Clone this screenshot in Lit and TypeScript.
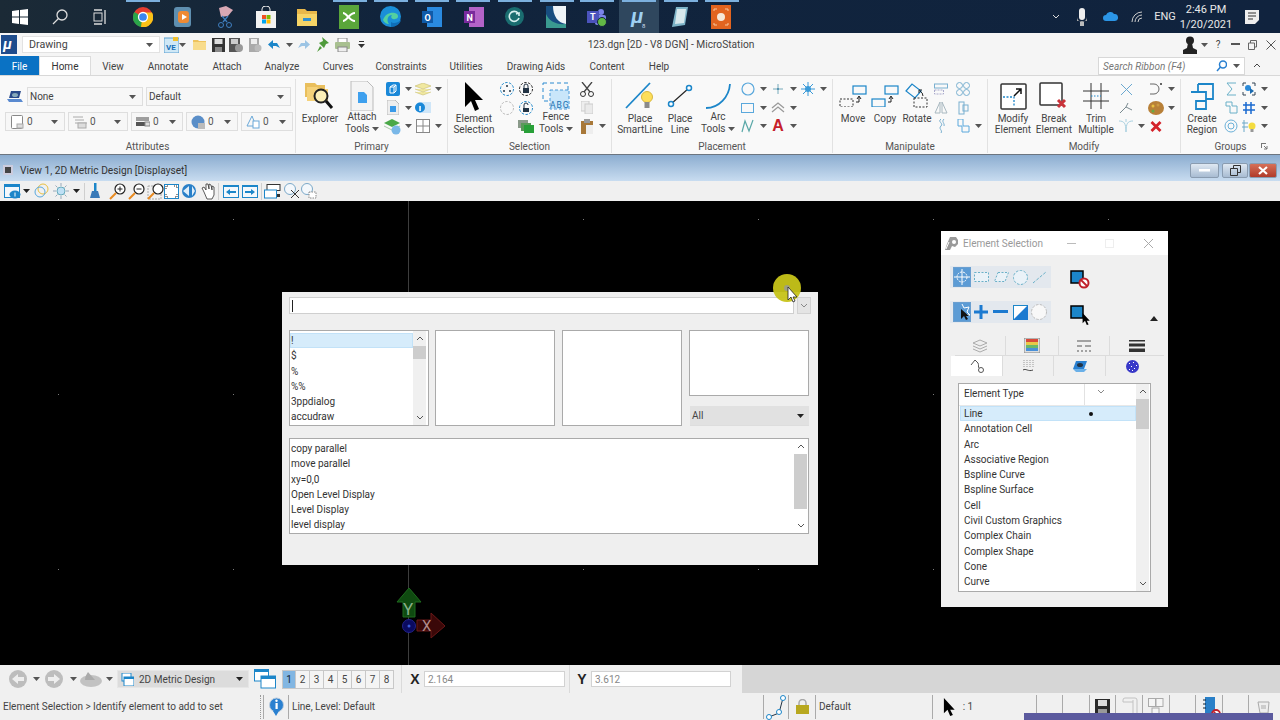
import { LitElement, html, css, svg } from "lit";
import { customElement } from "lit/decorators.js";

const I = (w: number, h: number, b: any) => html`<svg width=${w} height=${h} viewBox="0 0 ${w} ${h}">${b}</svg>`;
const row = (start: number, items: any[]) => {
  let cur = start;
  return items.map(([c, w, t]) => {
    const ml = c - w / 2 - cur;
    cur = c + w / 2;
    return html`<div class="sl" style="margin-left:${ml}px;width:${w}px">${t}</div>`;
  });
};
const car = I(7, 4, svg`<path d="M0 0h7L3.5 4z" fill="#555"/>`);
const carK = I(7, 4, svg`<path d="M0 0h7L3.5 4z" fill="#222"/>`);
const chev = (col = "#555") => I(8, 5, svg`<path d="M1 1l3 3 3-3" fill="none" stroke=${col}/>`);
const chevU = (col = "#555") => I(8, 5, svg`<path d="M1 4l3-3 3 3" fill="none" stroke=${col}/>`);
const ptr = (sc = 1, col = "#000") => I(13 * sc, 20 * sc, svg`<path transform="scale(${sc})" d="M1 0v17l4-4 3 7 3-1-3-6h5z" fill=${col}/>`);
const B = "#1c86c9";

const tb = {
  win: I(16, 16, svg`<path d="M0 2l7-1v6.500H0zM8 1l8-1v7.500H8zM0 8.500h7V15l-7-1zM8 8.500h8V16l-8-1z" fill="#fff"/>`),
  search: I(16, 16, svg`<circle cx="10" cy="6" r="5" fill="none" stroke="#ddd" stroke-width="1.300"/><path d="M6.500 9.500L1 15" stroke="#ddd" stroke-width="1.300"/>`),
  tv: I(14, 16, svg`<rect x="1" y="4" width="8" height="8" fill="none" stroke="#ddd"/><path d="M1 1h8M1 15h8M12 1v14" stroke="#ddd" stroke-width="1.300"/>`),
  chrome: I(20, 20, svg`<circle cx="10" cy="10" r="10" fill="#e53d30"/><path d="M10 10L1.300 5A10 10 0 0 0 8 20z" fill="#2aa54a"/><path d="M10 5.500h9A10 10 0 0 1 8 20z" fill="#fbc117"/><circle cx="10" cy="10" r="4.500" fill="#3b86ee" stroke="#fff" stroke-width="1.300"/>`),
  play: I(17, 20, svg`<rect width="17" height="20" rx="3" fill="#5f8fb0"/><rect x="4" y="4" width="11" height="12" rx="3" fill="#ef8a33"/><path d="M8 7l5 3-5 3z" fill="#fff"/>`),
  snip: I(18, 22, svg`<path d="M3 2l7-2 7 4-5 6-7 1z" fill="#d8a8b4"/><path d="M6 10l5 6M12 10l-5 6" stroke="#3f7fc0" stroke-width="1.200"/><circle cx="5" cy="19" r="2.500" fill="none" stroke="#3f7fc0"/><circle cx="13" cy="19" r="2.500" fill="none" stroke="#3f7fc0"/>`),
  store: I(20, 22, svg`<rect y="5" width="20" height="17" fill="#f2f2f2"/><path d="M6 6V3a4 3 0 0 1 8 0v3" fill="none" stroke="#eee"/><rect x="6" y="9" width="4" height="4" fill="#f25022"/><rect x="10.500" y="9" width="4" height="4" fill="#7fba00"/><rect x="6" y="13.500" width="4" height="4" fill="#00a4ef"/><rect x="10.500" y="13.500" width="4" height="4" fill="#ffb900"/>`),
  expl: I(20, 18, svg`<path d="M0 1h8l2 2h10v15H0z" fill="#e8b84a"/><rect y="6" width="20" height="12" fill="#f6d466"/><rect x="6" y="10" width="8" height="3" fill="#2f8fd0"/>`),
  xs: I(20, 24, svg`<rect width="20" height="24" fill="#5aa63a"/><path d="M4 8c4 0 6 8 12 8M4 16c4 0 6-8 12-8" fill="none" stroke="#fff" stroke-width="2"/>`),
  edge: I(21, 21, svg`<circle cx="10.500" cy="10.500" r="10.500" fill="#1a8fd8"/><path d="M3 14c2-7 10-9 14-6 2 2 1 5-2 5-3 1-5-2-3-4-4 0-6 5-3 9-3 0-5-2-6-4z" fill="#53d0a0"/><path d="M11 21c5 0 9-3 10-7-3 3-8 4-10 2z" fill="#0f6fb8"/>`),
  outlook: I(20, 20, svg`<rect x="5" width="15" height="20" fill="#2a8ae0"/><rect y="4" width="11" height="12" fill="#0f5aa8"/><text x="2.500" y="13.500" font-size="9" fill="#fff" font-weight="700">O</text>`),
  one: I(20, 20, svg`<rect x="5" width="15" height="20" fill="#b463c8"/><rect y="4" width="11" height="12" fill="#7a2a9c"/><text x="2.500" y="13.500" font-size="9" fill="#fff" font-weight="700">N</text>`),
  teal: I(19, 19, svg`<circle cx="9.500" cy="9.500" r="9.500" fill="#1a6d70"/><path d="M13 6a5 5 0 1 0 1 5M11 7l3-1 0 3" fill="none" stroke="#d8f0f0" stroke-width="1.600"/>`),
  moon: I(20, 22, svg`<rect width="20" height="22" fill="#174d80"/><path d="M7 0h13v18C12 17 7 10 7 0z" fill="#eef4f8"/><path d="M0 8c3 7 10 11 20 10v4H0z" fill="#3a9a90"/>`),
  teams: I(20, 20, svg`<circle cx="14" cy="5" r="3" fill="#7b83eb"/><rect x="8" y="8" width="11" height="10" rx="2" fill="#7b83eb"/><rect y="4" width="12" height="12" fill="#4b53bc"/><text x="3" y="13" font-size="9" fill="#fff" font-weight="700">T</text><circle cx="15" cy="15" r="4.500" fill="#62b846" stroke="#12263c"/>`),
  ms: I(22, 24, svg`<text x="3" y="18" font-size="21" font-style="italic" font-weight="700" fill="#9fd0f2">μ</text><text x="14" y="23" font-size="6" fill="#cde">8</text>`),
  note: I(16, 20, svg`<path d="M4 0h12l-3 18-13 2z" fill="#7eb4c8"/><path d="M5 2h9l-2 14-9 1z" fill="#d8e8ec"/>`),
  orange: I(20, 24, svg`<rect width="20" height="24" fill="#e2641f"/><circle cx="10" cy="12" r="4" fill="#f6e8d8"/><path d="M3 6V4h3M14 4h3v2M3 18v2h3M14 20h3v-2" stroke="#f6c8a0" fill="none"/>`),
  mic: I(10, 18, svg`<rect x="2" width="6" height="12" rx="3" fill="#eee"/><path d="M0 9a5 5 0 0 0 10 0v4H0z" fill="#aaa"/><rect x="3" y="14" width="4" height="4" fill="#bbb"/>`),
  cloud: I(15, 9, svg`<path d="M3 9a3 3 0 0 1 0-6 4.500 4.500 0 0 1 8-1 3.500 3.500 0 0 1 1 7z" fill="#2b95e6"/>`),
  wifi: I(12, 12, svg`<g fill="none" stroke="#ccc"><path d="M1 11a10 10 0 0 1 10-10"/><path d="M4 11a7 7 0 0 1 7-7"/><path d="M7 11a4 4 0 0 1 4-4"/></g>`),
  notif: I(14, 14, svg`<path d="M0 0h14v10l-4 4H0z" fill="#eee"/><path d="M3 3h8M3 6h8M3 9h5" stroke="#333"/>`),
};
const user = I(14, 18, svg`<circle cx="7" cy="4.500" r="4" fill="#222"/><path d="M5 7h4l1 5 4 2v4H0v-4l4-2z" fill="#222"/>`);

const t = {
  logo: I(16, 19, svg`<rect width="16" height="19" fill="#1e4c8c"/><text x="2" y="14" font-size="15" font-style="italic" font-weight="700" fill="#fff">μ</text>`),
  ve: I(15, 16, svg`<rect y="1" width="15" height="15" fill="#cfe8f6" stroke="#5a9fd0"/><text x="2" y="13" font-size="8" fill="#1a70b8" font-weight="700">VE</text><rect x="9" width="5" height="4" fill="#f0c030"/>`),
  open: I(14, 11, svg`<path d="M0 1h5l1 1h7v9H0z" fill="#eec35e"/><rect y="3" width="13" height="8" fill="#f8dc8c"/>`),
  save: (c = "#333") => I(13, 14, svg`<rect width="13" height="14" fill=${c}/><rect x="2.500" y="1" width="8" height="5" fill="#ddd"/><rect x="3" y="9" width="7" height="5" fill="#888"/>`),
  saves: I(14, 14, svg`<rect width="11" height="14" fill="#555"/><rect x="2" y="1" width="7" height="5" fill="#ccc"/><circle cx="10" cy="10" r="4" fill="#999"/>`),
  compress: I(13, 14, svg`<rect width="10" height="14" fill="#aaa"/><rect x="2" y="1" width="6" height="5" fill="#eee"/><circle cx="9" cy="10" r="3.500" fill="#bbb"/>`),
  undo: (col: string, f = false) => I(12, 9, svg`<path transform=${f ? "translate(12) scale(-1 1)" : ""} d="M0 4.500L5 0v3h4l3 5-4-2H5v3z" fill=${col}/>`),
  pin: I(12, 15, svg`<path d="M5 0l7 6-3 1-2 4-5-5 4-2zM3 9l-3 6 5-4" fill="#4e9a3a"/>`),
  print: I(15, 14, svg`<rect x="3" width="9" height="5" fill="#fff" stroke="#888"/><rect y="4" width="15" height="7" rx="1" fill="#a8c090"/><rect x="3" y="9" width="9" height="5" fill="#eee" stroke="#888"/>`),
  more: I(7, 7, svg`<path d="M1 0h5v1H1zM0 3h7L3.500 7z" fill="#333"/>`),
};

const big = {
  explorer: I(32, 30, svg`<path d="M1 2h10l2 2h8v12H1z" fill="#e9bf5d"/><path d="M3 6h10l2 2h9v12H3z" fill="#f5d27a"/><circle cx="17" cy="15" r="6.500" fill="#fdf0b8" stroke="#222" stroke-width="2"/><path d="M22 20l6 7" stroke="#111" stroke-width="3"/>`),
  attach: I(24, 30, svg`<path d="M1 0h16l6 6v24H1z" fill="#f4f4f4" stroke="#bbb"/><path d="M8 11h6l3 3v8H8z" fill="#3ea0ee"/>`),
  arrow: I(20, 29, svg`<path d="M1 0v25l6-6 4 10 4-2-4-9h8z" fill="#000"/>`),
  fence: I(28, 28, svg`<rect x="1" y="1" width="25" height="18" fill="none" stroke="#2a8ad0" stroke-dasharray="4 3"/><rect x="8" y="8" width="19" height="19" fill="#c9e6fa" stroke="#4a9ada" stroke-dasharray="3 2"/><text x="8" y="26" font-size="8.500" fill="#1870b0" letter-spacing="1">ABG</text>`),
  smart: I(30, 28, svg`<path d="M1 26L25 1" stroke="#1c86c9" stroke-width="1.800"/><circle cx="22" cy="15" r="5.500" fill="#fdde5a" stroke="#d8b840"/><rect x="19.500" y="20" width="5" height="6" fill="#8a8a8a"/>`),
  line: I(26, 24, svg`<path d="M4 20L22 4" stroke="#222" stroke-width="1.200"/><circle cx="4" cy="20" r="2.500" fill="#fff" stroke=${B} stroke-width="1.500"/><circle cx="22" cy="4" r="2.500" fill="#fff" stroke=${B} stroke-width="1.500"/>`),
  arc: I(26, 26, svg`<path d="M1 25C14 25 24 14 25 1" fill="none" stroke=${B} stroke-width="1.800"/>`),
  move: I(28, 22, svg`<rect x="14" y="1" width="13" height="8" fill="none" stroke=${B} stroke-width="1.200"/><rect x="1" y="14" width="13" height="8" fill="none" stroke="#333" stroke-dasharray="2 1.500"/><path d="M17 17h3v-5M18 14l2-3 2 3" fill="none" stroke="#222"/>`),
  copy: I(28, 22, svg`<rect x="14" y="1" width="13" height="8" fill="none" stroke=${B} stroke-width="1.200"/><rect x="1" y="14" width="13" height="8" fill="none" stroke=${B} stroke-width="1.200"/><path d="M17 17h3v-5M18 14l2-3 2 3" fill="none" stroke="#222"/>`),
  rotate: I(24, 26, svg`<path d="M1 8L7 1l9 7-6 7z" fill="none" stroke=${B} stroke-width="1.200"/><rect x="9" y="15" width="13" height="9" fill="none" stroke="#333" stroke-dasharray="2 1.500"/><path d="M18 13a6 6 0 0 0-3-5M14 10l0-3 3 0" fill="none" stroke="#222"/>`),
  modify: I(27, 27, svg`<rect x="1" y="1" width="25" height="25" rx="1" fill="#fff" stroke="#333" stroke-width="1.500"/><path d="M3 14h11v10" fill="none" stroke=${B} stroke-dasharray="2 1.500" stroke-width="1.300"/><path d="M14 13l7-7M16 6h5v5" fill="none" stroke="#111" stroke-width="1.500"/>`),
  brk: I(30, 28, svg`<rect x="1" y="1" width="22" height="22" rx="1" fill="#fff" stroke="#333" stroke-width="1.500"/><path d="M19 18l7 7M26 18l-7 7" stroke="#c9333a" stroke-width="3"/>`),
  trim: I(28, 28, svg`<path d="M1 9h26M1 19h26M9 1v26M19 1v26" stroke="#333"/><path d="M9 14h10" stroke=${B} stroke-dasharray="1.500 1.500"/>`),
  region: I(24, 27, svg`<path d="M8 1h15v15H16M1 9h15v9H6v8h10V9M8 1v8" fill="none" stroke=${B} stroke-width="1.800"/>`),
};
const sm = {
  level: I(16, 16, svg`<rect x="1" y="1" width="14" height="14" rx="2" fill="#1a88d8"/><path d="M5 6l3-2h3v6l-2 2H5zM5 6h4v6M9 6l2-2" fill="none" stroke="#fff"/>`),
  stack: I(16, 13, svg`<path d="M0 3l8-3 8 3-8 3zM0 6l8 3 8-3M0 9l8 3 8-3" fill="#f0e8a0" stroke="#c8bc70" stroke-width=".6"/>`),
  doc: I(12, 15, svg`<path d="M0 0h8l4 4v11H0z" fill="#eee" stroke="#bbb"/><rect x="3" y="6" width="6" height="6" fill="#3a9ae8"/>`),
  info: I(16, 11, svg`<rect x="4" y="0" width="12" height="11" fill="#cfe6f8"/><circle cx="5" cy="5.500" r="5" fill="#1a88d8"/><rect x="4.300" y="4" width="1.500" height="5" fill="#fff"/>`),
  green: I(18, 18, svg`<path d="M0 6l8-4 8 4-8 4z" fill="#4aa848"/><path d="M0 9l8 4 8-4" fill="none" stroke="#a8c8a8"/><circle cx="12" cy="13" r="4.500" fill="#7ab8e8"/>`),
  pane: I(14, 14, svg`<rect x=".5" y=".5" width="13" height="13" fill="#fff" stroke="#888"/><path d="M7 0v14M0 7h14" stroke="#888"/>`),
  dash1: I(16, 16, svg`<circle cx="8" cy="8" r="6.500" fill="none" stroke=${B} stroke-dasharray="2.500 1.500"/><circle cx="8" cy="5" r="1" fill="#234"/><circle cx="5" cy="10" r="1" fill="#234"/><circle cx="11" cy="10" r="1" fill="#234"/>`),
  lock: I(16, 16, svg`<circle cx="8" cy="8" r="6.500" fill="none" stroke="#222" stroke-dasharray="2.500 1.500"/><rect x="5" y="7" width="6" height="5" fill="#234"/><path d="M6 7V5a2 2 0 0 1 4 0v2" fill="none" stroke="#234"/>`),
  dash2: I(16, 16, svg`<circle cx="8" cy="8" r="6.500" fill="none" stroke="#bbb" stroke-dasharray="2.500 1.500"/>`),
  unlock: I(16, 16, svg`<circle cx="8" cy="8" r="6.500" fill="none" stroke=${B} stroke-dasharray="2.500 1.500"/><rect x="5" y="8" width="6" height="4" fill="#234"/><path d="M6 8V5a2 2 0 0 1 4 0" fill="none" stroke="#234"/>`),
  cards: I(16, 13, svg`<rect y="0" width="10" height="8" fill="#8a9a8a"/><rect x="3" y="3" width="10" height="8" fill="#5a9a5a"/><rect x="6" y="5" width="10" height="8" fill="#28a038"/>`),
  cut: I(14, 15, svg`<path d="M2 0l8 10M12 0L4 10" stroke="#444" stroke-width="1.300"/><circle cx="3" cy="12" r="2.500" fill="none" stroke="#333"/><circle cx="11" cy="12" r="2.500" fill="none" stroke="#333"/>`),
  copy: I(12, 13, svg`<rect width="8" height="10" fill="#eee" stroke="#ccc"/><rect x="4" y="3" width="8" height="10" fill="#eaeaea" stroke="#ccc"/>`),
  paste: I(12, 15, svg`<rect y="2" width="12" height="13" fill="#a87838"/><rect x="3" width="6" height="4" fill="#999"/><rect x="5" y="6" width="7" height="9" fill="#eee"/>`),
  circle: I(14, 14, svg`<circle cx="7" cy="7" r="6" fill="none" stroke="#5aa8dc" stroke-width="1.200"/>`),
  rect: I(14, 10, svg`<rect x=".5" y=".5" width="12" height="9" fill="none" stroke="#5aa8dc"/>`),
  zig: I(14, 14, svg`<path d="M1 13L4 2l4 10 4-11" fill="none" stroke="#5aa8a8" stroke-width="1.200"/>`),
  plus: I(12, 12, svg`<path d="M6 1v10M1 6h10" stroke="#7ab" /><circle cx="6" cy="6" r="1" fill="#48a"/>`),
  chevs: I(14, 12, svg`<path d="M1 6l6-5 6 5M1 10l6-5 6 5" fill="none" stroke="#9a9a9a" stroke-width="1.300"/>`),
  a: html`<span class="redA">A</span>`,
  sun: I(14, 14, svg`<circle cx="7" cy="7" r="3" fill="#3a9ad8"/><path d="M7 0v14M0 7h14M2 2l10 10M12 2L2 12" stroke="#3a9ad8" stroke-width="1"/>`),
  m1: I(14, 12, svg`<rect x=".5" y="1" width="13" height="4" fill="none" stroke="#7ab0d0"/><rect x=".5" y="7" width="9" height="4" fill="none" stroke="#aac" stroke-dasharray="2 1"/>`),
  m2: I(14, 14, svg`<g fill="none" stroke="#7ab0d0"><circle cx="3.500" cy="3.500" r="3"/><circle cx="10.500" cy="3.500" r="3"/><circle cx="3.500" cy="10.500" r="3"/><circle cx="10.500" cy="10.500" r="3"/></g>`),
  m3: I(14, 13, svg`<path d="M6 1L1 12h5zM8 1l5 11H8z" fill="none" stroke="#a8b8c0"/>`),
  m4: I(12, 14, svg`<rect x="2" y="1" width="5" height="12" fill="none" stroke="#7ab0d0"/><rect x="6" y="4" width="5" height="6" fill="none" stroke="#7ab0d0"/>`),
  m5: I(8, 14, svg`<path d="M4 0c-4 3 3 4 0 7s2 4 0 7M7 0c-3 3 1 4 0 7" fill="none" stroke="#7ab0d0"/>`),
  m6: I(13, 14, svg`<path d="M1 0h5v7h6v6H5V7H1z" fill="none" stroke="#5aa8dc"/>`),
  x: I(13, 13, svg`<path d="M1 1l11 11M12 1L1 12" stroke="#6aa8d0"/>`),
  y: I(14, 12, svg`<path d="M1 11l6-6 6 3M7 5l2-4" fill="none" stroke="#7a8a90"/>`),
  t: I(14, 14, svg`<path d="M0 2c5 0 7 2 7 11M14 2C9 2 7 4 7 13M7 0v3" fill="none" stroke="#a8d0e0"/>`),
  ext: I(14, 12, svg`<path d="M1 1h4a5 5 0 0 1 0 10H1" fill="none" stroke="#666"/><circle cx="12" cy="1" r="1" fill="#333"/>`),
  pal: I(16, 14, svg`<ellipse cx="8" cy="7" rx="8" ry="7" fill="#b88038"/><circle cx="5" cy="5" r="1.500" fill="#e8c040"/><circle cx="10" cy="4" r="1.500" fill="#c94"/><circle cx="5" cy="10" r="1.500" fill="#6a4"/>`),
  redx: I(12, 11, svg`<path d="M1.500 1l9 9M10.500 1l-9 9" stroke="#d4222a" stroke-width="2.800"/>`),
  g1: I(12, 14, svg`<path d="M11 1H2l5 6-5 6h9" fill="none" stroke="#6ab0c8"/>`),
  g2: I(13, 13, svg`<path d="M1 1v4h4v7h7V5H7V1z" fill="none" stroke="#6ab0c8"/>`),
  g3: I(14, 14, svg`<circle cx="7" cy="7" r="6" fill="none" stroke="#6ab0d8"/><circle cx="7" cy="7" r="3" fill="none" stroke="#6ab0d8"/>`),
  g4: I(14, 14, svg`<path d="M1 4V1h3M10 1h3v3M1 10v3h3M13 10v3h-3" fill="none" stroke="#345"/><circle cx="6" cy="6" r="3" fill="#2a8ad8"/><path d="M8 6l4 3-4 3z" fill="#1a6ab0"/>`),
  g5: I(12, 12, svg`<path d="M3 0v12M8 0v12M0 3h12M0 8h12" stroke="#1a6ad0" stroke-width="1.500"/>`),
  g6: I(16, 14, svg`<path d="M3 1v12M1 4h6M1 8h6" stroke="#6aa8c8"/><circle cx="11" cy="7" r="3.500" fill="#f4dc40"/><rect x="9.500" y="10" width="3" height="3" fill="#999"/>`),
};
const attr = {
  laptop: I(16, 13, svg`<path d="M4 1h10l-2 7H2z" fill="#2a4a8a"/><path d="M0 9h14l2 3H2z" fill="#5a8ad0"/><ellipse cx="8" cy="5" rx="3" ry="2" fill="#8ab"/>`),
  a: I(13, 14, svg`<rect x=".5" y=".5" width="11" height="13" rx="1" fill="#fff" stroke="#888"/><rect x="6" y="9" width="6" height="4" fill="#ddd" stroke="#aaa"/>`),
  b: I(14, 14, svg`<path d="M0 2h10M2 5h9M2 8h12" stroke="#aaa" /><rect x="5" y="8" width="8" height="5" fill="#ddd" stroke="#aaa"/>`),
  c: I(14, 10, svg`<path d="M0 1h13M0 3h13" stroke="#444" /><rect y="5" width="9" height="4" fill="#555"/><rect x="9" y="5" width="5" height="4" fill="#ddd" stroke="#888"/>`),
  d: I(14, 14, svg`<circle cx="7" cy="7" r="6.500" fill="#5a8ec8"/><rect x="7" y="8" width="7" height="6" fill="#bbb"/>`),
  e: I(14, 14, svg`<path d="M6 1L1 11h9z" fill="none" stroke="#6aa8d8"/><rect x="7" y="6" width="6" height="7" fill="#fff" stroke="#6aa8d8"/>`),
};
const v = {
  win: I(17, 15, svg`<rect x=".5" y=".5" width="15" height="13" fill="#f4f8fc" stroke=${B}/><rect y="0" width="16" height="3" fill=${B}/><ellipse cx="11" cy="10.500" rx="5.500" ry="4" fill=${B}/><rect x="10.500" y="8.500" width="1" height="4" fill="#fff"/>`),
  levels: I(16, 16, svg`<g fill="none" stroke="#e8c040"><circle cx="9" cy="6" r="5" /><circle cx="6" cy="9" r="5" stroke="#5aa8dc"/></g>`),
  sun: I(16, 16, svg`<circle cx="8" cy="8" r="4" fill="#bfe0f5" stroke="#6ab"/><path d="M8 0v3M8 13v3M0 8h3M13 8h3M2.500 2.500l2 2M11.500 11.500l2 2M13.500 2.500l-2 2M4.500 11.500l-2 2" stroke="#9ab"/>`),
  brush: I(12, 16, svg`<rect x="5" width="2.500" height="8" fill=${B}/><path d="M3 8h6l2 7H1z" fill="#3a7ab8"/>`),
  zin: I(17, 17, svg`<circle cx="11" cy="6" r="5" fill="#fff" stroke="#222" stroke-width="1.200"/><path d="M11 3.500v5M8.500 6h5" stroke="#222"/><path d="M7 10l-6 6" stroke="#e88a20" stroke-width="2"/>`),
  zout: I(17, 17, svg`<circle cx="11" cy="6" r="5" fill="#fff" stroke="#222" stroke-width="1.200"/><path d="M8.500 6h5" stroke="#222"/><path d="M7 10l-6 6" stroke="#e88a20" stroke-width="2"/>`),
  zwin: I(17, 17, svg`<rect x="1" y="3" width="13" height="13" fill="none" stroke="#aaa" stroke-dasharray="2 1"/><circle cx="11" cy="6" r="5" fill="#fff" stroke="#222" stroke-width="1.200"/><path d="M7 10l-6 6" stroke="#e88a20" stroke-width="2"/>`),
  fit: I(15, 15, svg`<rect x=".5" y=".5" width="14" height="14" fill="#fff" stroke=${B}/><path d="M2 5V2h3M10 2h3v3M2 10v3h3M13 10v3h-3" fill="none" stroke="#222" stroke-dasharray="1 1"/>`),
  rot: I(16, 16, svg`<circle cx="8" cy="8" r="7" fill="#2a80c8"/><path d="M8 3L2 8l6 5zM11 3l3 5-3 5z" fill="#dfeefa"/>`),
  hand: I(15, 17, svg`<path d="M3 9L1 5l2-1 2 3V1l2 0 1 5V1l2 1 1 5V3l2 1v8l-2 4H6z" fill="#fff" stroke="#333" stroke-width=".8"/>`),
  left: I(16, 13, svg`<rect x=".5" y=".5" width="15" height="12" fill="#f4f8fc" stroke=${B}/><rect width="16" height="2" fill=${B}/><path d="M3 7l4-3v2h6v2H7v2z" fill=${B}/>`),
  right: I(16, 13, svg`<rect x=".5" y=".5" width="15" height="12" fill="#f4f8fc" stroke=${B}/><rect width="16" height="2" fill=${B}/><path d="M13 7L9 4v2H3v2h6v2z" fill=${B}/>`),
  c1: I(17, 15, svg`<rect x="3" y=".5" width="13" height="6" fill="#fff" stroke="#333"/><rect x=".5" y="6" width="12" height="8" fill="#fff" stroke=${B}/><rect x="13" y="10" width="3" height="3" fill="#333"/>`),
  c2: I(17, 17, svg`<circle cx="6" cy="6" r="5.500" fill="#f4f8fc" stroke="#7aa8c8"/><path d="M7 7l8 8M15 7l-8 8" stroke="#333"/>`),
  c3: I(16, 16, svg`<circle cx="6" cy="6" r="5.500" fill="#f4f8fc" stroke="#7aa8c8"/><rect x="8" y="9" width="7" height="6" fill="#fff" stroke="#888" stroke-dasharray="1.500 1"/>`),
};
const e = {
  logo: I(14, 15, svg`<path d="M5 1h6l2 3v4l-3 3-3-1-2 4H0l2-6z" fill="#9a9a9a"/><circle cx="9" cy="6" r="2" fill="#fff"/><path d="M1 13l3-7" stroke="#fff"/>`),
  t1: I(16, 16, svg`<path d="M8 0v16M0 8h16" stroke="#fff"/><circle cx="8" cy="8" r="5" fill="none" stroke="#fff" stroke-dasharray="2 1"/>`),
  t2: I(15, 10, svg`<rect x=".5" y=".5" width="14" height="9" fill="#eaf2f8" stroke="#6ab0c8" stroke-dasharray="2 1.500"/>`),
  t3: I(15, 10, svg`<path d="M4 .5h10.500L11 9.500H.5z" fill="#eaf2f8" stroke="#6ab0c8" stroke-dasharray="2 1.500"/>`),
  t4: I(15, 15, svg`<circle cx="7.500" cy="7.500" r="7" fill="#eaf2f8" stroke="#6ab0c8" stroke-dasharray="2.500 1.500"/>`),
  t5: I(15, 13, svg`<path d="M1 12L14 1" stroke="#6ab0c8" stroke-dasharray="3 1.500"/>`),
  block: I(14, 14, svg`<rect x="1" y="1" width="12" height="12" fill=${B} stroke="#000" stroke-width="1.500"/>`),
  no: I(12, 12, svg`<circle cx="6" cy="6" r="4.500" fill="#fff" stroke="#c0202a" stroke-width="2"/><path d="M3 3l6 6" stroke="#c0202a" stroke-width="1.800"/>`),
  s1: I(17, 17, svg`<path d="M8 0l2 4 5-1-2 5 3 3h-5" stroke="#fff" fill="none"/><path d="M7 5v10l3-3 2 4 2-1-2-3h3z" fill="#111"/>`),
  plus: I(14, 14, svg`<path d="M7 0v14M0 7h14" stroke="#1c7ad0" stroke-width="3"/>`),
  minus: I(15, 4, svg`<rect width="15" height="3" fill="#1c7ad0"/>`),
  half: I(15, 15, svg`<rect x=".5" y=".5" width="14" height="14" fill="#fff" stroke=${B}/><path d="M15 0v15H0z" fill="#1c7ad0"/>`),
  c: I(16, 16, svg`<circle cx="8" cy="8" r="7.500" fill="#f8f8f8" stroke="#bbb" stroke-dasharray="2.500 1.500"/>`),
  layers: I(14, 14, svg`<path d="M0 4l7-3 7 3-7 3z" fill="#eee" stroke="#aaa"/><path d="M0 7l7 3 7-3M0 10l7 3 7-3" fill="none" stroke="#aaa"/>`),
  color: I(16, 15, svg`<rect width="16" height="15" fill="#ddd" stroke="#888"/><rect x="2" y="1" width="12" height="3" fill="#d84a3a"/><rect x="2" y="4" width="12" height="3" fill="#e8c848"/><rect x="2" y="7" width="12" height="3" fill="#6ab86a"/><rect x="2" y="10" width="12" height="3" fill="#4a90d8"/>`),
  style: I(14, 14, svg`<path d="M0 2h14M0 7h5M8 7h6M0 12h2M4 12h2M8 12h2M12 12h2" stroke="#555"/>`),
  weight: I(16, 12, svg`<rect width="16" height="1.500" fill="#333"/><rect y="3.500" width="16" height="3" fill="#333"/><rect y="8.500" width="16" height="3.500" fill="#333"/>`),
  el: I(14, 14, svg`<path d="M1 6l4-5 3 3c1 2 0 4 1 5" fill="none" stroke="#555"/><circle cx="11" cy="11" r="2.500" fill="none" stroke="#555"/>`),
  cls: I(12, 14, svg`<path d="M2 1v7M5 1v7M8 1v7M11 1v7" stroke="#999" stroke-dasharray="1 1"/><path d="M1 11c3-2 5 2 10 0" fill="none" stroke="#444"/>`),
  tmpl: I(16, 13, svg`<path d="M4 1h11l-3 8H1z" fill="#2a80d0"/><path d="M1 9l3 3h8l3-3" fill="#6ab0e8"/><ellipse cx="8" cy="5" rx="3" ry="2" fill="#234"/>`),
  ball: I(13, 13, svg`<circle cx="6.500" cy="6.500" r="6.500" fill="#3838c8"/><path d="M3 3h1v1H3zM7 2h1v1H7zM10 5h1v1h-1zM5 6h1v1H5zM8 8h1v1H8zM3 9h1v1H3zM6 10h1v1H6z" fill="#fff"/>`),
};
const st = {
  back: I(18, 18, svg`<circle cx="9" cy="9" r="9" fill="#bdbdbd"/><path d="M3 9l6-5v3h6v4H9v3z" fill="#eee"/>`),
  fwd: I(18, 18, svg`<circle cx="9" cy="9" r="9" fill="#bdbdbd"/><path d="M15 9L9 4v3H3v4h6v3z" fill="#eee"/>`),
  dish: I(22, 16, svg`<ellipse cx="11" cy="10" rx="11" ry="6" fill="#c2c2c2"/><path d="M5 9c0-4 2-6 3-8l7 8z" fill="#aaa"/>`),
  dual: I(13, 13, svg`<rect x="1" y="0" width="9" height="8" fill="#fff" stroke=${B}/><rect x="3" y="4" width="10" height="9" fill="#fff" stroke=${B}/><rect x="3" y="4" width="10" height="2" fill=${B}/>`),
  dual2: I(22, 20, svg`<rect x=".5" y="1" width="14" height="11" fill="#fff" stroke=${B}/><rect width="15" height="3" fill=${B}/><rect x="7" y="7" width="14.500" height="12" fill="#fff" stroke=${B}/><rect x="7" y="7" width="15" height="3" fill=${B}/>`),
  info: I(15, 19, svg`<circle cx="7.500" cy="8" r="7" fill="#2a80d0" stroke="#bcd"/><path d="M4 14l3 5 3-5z" fill="#2a80d0"/><rect x="6.500" y="6" width="2.200" height="6" fill="#fff"/><circle cx="7.500" cy="3.800" r="1.200" fill="#fff"/>`),
  curve: I(20, 26, svg`<path d="M3 23l10-4 4-15" fill="none" stroke="#234"/><circle cx="3" cy="23" r="2.500" fill="#fff" stroke=${B}/><circle cx="13" cy="18" r="2.500" fill="#fff" stroke=${B}/><circle cx="17" cy="4" r="2.500" fill="#fff" stroke=${B}/>`),
  lock: I(13, 15, svg`<path d="M3 6V4a3.500 3.500 0 0 1 7 0v2" fill="none" stroke="#a8a8a8" stroke-width="1.500"/><rect y="6" width="13" height="9" fill="#b8a820"/>`),
  save: I(15, 16, svg`<rect width="15" height="16" fill="#2a2a2a"/><rect x="3" y="1" width="9" height="6" fill="#ddd"/><rect x="3" y="10" width="9" height="6" fill="#999"/>`),
  scroll: I(17, 20, svg`<path d="M4 1h10a2 2 0 0 1 2 2v14a2 2 0 0 1-4 0V3M4 1a2 2 0 0 0-2 2v2h10M12 17H3a2 2 0 0 0 2 2h9" fill="none" stroke="#c2c2c2"/>`),
  grid: I(16, 18, svg`<g fill="#f5f5f5" stroke="#aaa"><rect x=".5" y=".5" width="7" height="8"/><rect x="8" y=".5" width="7" height="8"/><rect x="4" y="10" width="7" height="8"/></g>`),
  note: I(13, 20, svg`<rect x="2" width="10" height="18" fill="#2a80c8"/><path d="M0 3h3M0 7h3M0 11h3" stroke="#123"/>`),
  no: I(10, 10, svg`<circle cx="5" cy="5" r="4" fill="#fff" stroke="#c0202a" stroke-width="1.800"/><path d="M2.500 2.500l5 5" stroke="#c0202a" stroke-width="1.600"/>`),
  cube: I(13, 14, svg`<path d="M1 2h11l-1 11H3z" fill="#eee" stroke="#aaa"/><path d="M4 5h5v4H4z" fill="#ccc"/>`),
};

const caretCell = (i: any, c = true) => html`<div class="smr"><span class="smi">${i}</span>${c ? html`<span class="smc">${car}</span>` : ""}</div>`;
const col = (w: number, items: any[]) => html`<div class="smcol" style="width:${w}px">${items.map(([i, c]) => caretCell(i, c))}</div>`;
const bigb = (w: number, icon: any, lines: any[], up = false) => html`<div class="bigb" style="width:${w}px"><div class="bigi">${icon}</div><div class="bigt ${up ? "up" : ""}">${lines.map((l) => html`<div>${l}</div>`)}</div></div>`;
const sp = (w: number) => html`<div style="width:${w}px;flex:none"></div>`;
const arrowed = (s: string) => html`${s} <span class="tc">${car}</span>`;
const group = (w: number, label: string, body: any, extra?: any) => html`<div class="grp" style="width:${w}px"><div class="grpc">${body}</div><div class="grpl">${label}${extra ?? ""}</div></div>`;
const acombo = (w: number, icon: any) => html`<div class="ac" style="width:${w}px"><span class="aci">${icon}</span><span>0</span><span class="grow"></span>${car}</div>`;

@customElement("app-root")
export class AppRoot extends LitElement {
  static styles = css`
    :host { display: block; width: 1280px; height: 720px; overflow: hidden; position: relative; font-family: "Roboto", "Liberation Sans", sans-serif; font-size: 10px; color: #444; background: #f0f0f0; }
    text { font-family: "Roboto", "Liberation Sans", sans-serif; }
    svg { display: block; flex: none; }
    .sl { flex: none; display: flex; align-items: center; justify-content: center; white-space: nowrap; }
    .grow { flex: 1; }
    .task { height: 33px; display: flex; align-items: center; background: linear-gradient(90deg, #1b2a36, #11243c 30%, #10233e); color: #e6e6e6; position: relative; font-size: 11px; }
    .strip { position: absolute; top: 0; left: 0; height: 2px; display: flex; }
    .strip .sl { height: 2px; background: #7cb0de; }
    .act { height: 33px; background: #2f475e; }
    .clock { line-height: 15px; text-align: center; font-size: 11px; color: #e8e8e8; }
    .tr { height: 23px; display: flex; align-items: center; background: #f5f5f5; position: relative; }
    .tcb { height: 17px; background: #fff; border: 1px solid #e2e2e2; box-sizing: border-box; display: flex; align-items: center; justify-content: space-between; padding: 0 6px; width: 138px; color: #444; font-size: 10.700px; }
    .ttl { font-size: 10.200px; color: #444; }
    .tabs { height: 20px; display: flex; background: #f5f5f5; border-bottom: 1px solid #d8d8d8; box-sizing: border-box; position: relative; align-items: stretch; }
    .tab { display: flex; align-items: center; justify-content: center; flex: none; font-size: 10px; color: #444; padding-top: 1px; box-sizing: border-box; }
    .tab.file { background: #0a72c4; color: #fff; }
    .tab.on { background: #fff; border: 1px solid #dcdcdc; border-bottom: none; color: #333; }
    .srch { display: flex; align-items: center; margin-left: 417px; height: 18px; width: 147px; background: #fff; border: 1px solid #d8d8d8; box-sizing: border-box; padding: 0 4px; font-style: italic; color: #777; font-size: 10px; gap: 6px; margin-top: 1px; }
    .col { display: flex; align-items: center; width: 24px; justify-content: center; }
    .rib { height: 79px; display: flex; background: #f9f9f9; border-bottom: 1px solid #6c7580; box-sizing: border-box; }
    .grp { flex: none; box-sizing: border-box; border-right: 1px solid #e2e2e2; display: flex; flex-direction: column; margin: 3px 0 1px; }
    .grp:last-child { border-right: none; }
    .grpc { height: 60px; flex: none; display: flex; padding-top: 1px; box-sizing: border-box; }
    .grpl { height: 14px; flex: none; margin-top: 1px; text-align: center; line-height: 14px; color: #555; position: relative; font-size: 10px; }
    .launch { position: absolute; right: 12px; top: 3px; }
    .bigb { flex: none; display: flex; flex-direction: column; align-items: center; }
    .bigi { height: 32px; display: flex; align-items: center; justify-content: center; }
    .bigt { line-height: 11px; text-align: center; white-space: nowrap; margin-top: 1px; color: #444; }
    .bigt.up { margin-top: -1px; }
    .tc { display: inline-block; vertical-align: 1px; }
    .tc svg { display: inline-block; }
    .smcol { flex: none; display: flex; flex-direction: column; }
    .smr { height: 18.500px; display: flex; align-items: center; }
    .smi { width: 20px; display: flex; justify-content: center; flex: none; }
    .smc { width: 10px; display: flex; justify-content: center; flex: none; }
    .redA { color: #c5202a; font: 700 16px "Liberation Sans", sans-serif; line-height: 16px; }
    .attrs { display: flex; flex-direction: column; padding: 7px 0 0 5px; gap: 6px; }
    .arow { display: flex; align-items: center; gap: 3px; }
    .cb { height: 19px; border: 1px solid #dedede; background: #f7f7f7; box-sizing: border-box; display: flex; align-items: center; justify-content: space-between; padding: 0 6px 0 2px; font-size: 10px; color: #444; }
    .ac { height: 19px; border: 1px solid #dedede; background: #f7f7f7; box-sizing: border-box; display: flex; align-items: center; padding: 0 6px 0 4px; gap: 3px; flex: none; font-size: 10px; color: #555; }
    .aci { display: flex; width: 14px; justify-content: center; }
    .vt { height: 26px; padding-top: 4px; box-sizing: border-box; display: flex; align-items: center; background: linear-gradient(#8cadd0, #c8dcf0); color: #333; font-size: 10.200px; }
    .vico { border: 2px solid #ccd; margin: 0 7px 0 3px; box-sizing: content-box; width: 6px; height: 6px; flex: none; background: #444; }
    .vbtn { height: 15px; border: 1px solid #8a9cb0; border-radius: 2px; background: linear-gradient(#dfe8f2, #a8bcd2); display: flex; align-items: center; justify-content: center; box-sizing: border-box; width: 100%; }
    .vbtn.red { background: linear-gradient(#d67058, #b03a2a); }
    .vtool { height: 20px; display: flex; align-items: center; background: #f0f0f0; }
    .vs { width: 1px; height: 17px; background: #cfcfcf; }
    .canvas { height: 464px; position: relative; background-color: #000; overflow: hidden;
      background-image: radial-gradient(circle at center, #7a7a7a 0, #7a7a7a .6px, transparent 1px); background-size: 175px 175px; background-position: -29px -69px; }
    .vline { position: absolute; left: 408px; top: 0; width: 1px; height: 100%; background: #3d3d3d; }
    .triad { position: absolute; left: 396px; top: 386px; }
    .dlg { position: absolute; left: 282px; top: 91px; width: 536px; height: 273px; background: #efefef; box-sizing: border-box; padding: 5px 7px; display: flex; flex-direction: column; }
    .dtop { display: flex; height: 17px; gap: 3px; }
    .dinp { width: 505px; background: #fff; border: 1px solid #cfcfcf; box-sizing: border-box; display: flex; align-items: center; padding-left: 2px; }
    .caret { width: 1px; height: 12px; background: #222; }
    .dbtn { width: 14px; background: #e4e4e4; border: 1px solid #d2d2d2; box-sizing: border-box; display: flex; align-items: center; justify-content: center; }
    .drow { display: flex; height: 96px; margin-top: 16px; }
    .lb { background: #fff; border: 1px solid #aaa; box-sizing: border-box; flex: none; display: flex; }
    .lrows { flex: 1; padding: 2px 0 0 0; color: #333; font-size: 10px; min-width: 0; }
    .lr { height: 15.300px; line-height: 15px; padding-left: 1px; white-space: nowrap; }
    .lr.sel { background: #d6ecfb; border: 1px solid #c2e2f8; box-sizing: border-box; line-height: 13px; padding-left: 0; display: flex; justify-content: space-between; }
    .sb { width: 13px; display: flex; flex-direction: column; align-items: center; flex: none; background: #f0f0f0; margin-right: 2px; }
    .sbw { background: #fff; margin-right: 1px; }
    .sba { height: 15px; display: flex; align-items: center; justify-content: center; flex: none; }
    .th { width: 100%; background: #cdcdcd; flex: none; }
    .sgap { flex: 1; }
    .rc { margin-left: 7px; width: 120px; display: flex; flex-direction: column; }
    .allb { margin: 10px 0 0 1px; height: 20px; background: #e1e1e1; display: flex; align-items: center; justify-content: space-between; padding: 0 5px 0 2px; color: #444; border-bottom: 1px solid #ddd; font-size: 10px; }
    .hl { position: absolute; left: 773px; top: 73px; width: 28px; height: 28px; border-radius: 50%; background: #c8c41a; opacity: .95; display: flex; align-items: center; justify-content: center; }
    .hli { width: 6px; height: 6px; border-radius: 50%; background: #a8a888; }
    .cur { position: absolute; left: 787px; top: 85px; }
    .esel { position: absolute; left: 941px; top: 30px; width: 227px; height: 376px; background: #f0f0f0; display: flex; flex-direction: column; }
    .et { height: 24px; background: #fff; display: flex; align-items: center; color: #999; font-size: 10px; flex: none; }
    .tbr { display: flex; height: 22px; align-items: center; margin-top: 11px; background: linear-gradient(90deg, transparent 9px, #e3e8ee 9px, #e3e8ee 110px, transparent 110px); }
    .tbr2 { margin-top: 13px; position: relative; }
    .ebtn { width: 18px; height: 20px; background: #5b9bd5; display: flex; align-items: center; justify-content: center; border: 1px solid #6a9fd0; box-sizing: border-box; }
    .emark { position: relative; display: flex; }
    .emark .o { position: absolute; left: 8px; top: 7px; }
    .emark .p { position: absolute; left: 12px; top: 8px; }
    .upt { position: absolute; right: 10px; top: 15px; }
    .etabs { display: flex; height: 20px; margin-left: 14px; margin-top: 13px; width: 209px; border-bottom: 1px solid #dcdcdc; box-sizing: border-box; }
    .etabs2 { margin-left: 10px; margin-top: 0; border-bottom: none; width: 208px; }
    .etb { flex: none; display: flex; align-items: center; justify-content: center; border-right: 1px solid #dcdcdc; box-sizing: border-box; }
    .etb.last { border-right: none; }
    .etb.on { background: #fff; }
    .elist { margin: 7px 0 0 17px; width: 193px; height: 209px; background: #fff; border: 1px solid #aaa; box-sizing: border-box; display: flex; }
    .ecol { flex: 1; display: flex; flex-direction: column; min-width: 0; }
    .ehead { height: 22px; display: flex; align-items: center; flex: none; font-size: 10px; color: #333; border-bottom: 1px solid #e8e8e8; box-sizing: border-box; }
    .ehead .h1 { width: 126px; padding: 0 0 3px 5px; box-sizing: border-box; border-right: 1px solid #e2e2e2; height: 100%; display: flex; align-items: center; }
    .ehead .h2 { flex: 1; display: flex; justify-content: center; padding: 0 19px 6px 0; }
    .erows { flex: 1; padding: 0 0 0 1px; font-size: 10px; color: #333; }
    .erows .lr { padding-left: 4px; height: 15.300px; }
    .erows .lr.sel { padding-left: 3px; padding-right: 42px; align-items: center; }
    .dot { width: 4px; height: 4px; border-radius: 50%; background: #111; }
    .esb { margin-right: 1px; }
    .bt { height: 28px; display: flex; align-items: center; background: linear-gradient(90deg, #f0f0f0 742px, #d6d6d6 742px); position: relative; }
    .cbm { height: 18px; background: #dcdcdc; display: flex; align-items: center; padding: 0 5px 0 3px; gap: 5px; box-sizing: border-box; border: 1px solid #e6e6e6; }
    .nums { display: flex; gap: 0; }
    .nb { width: 14px; height: 19px; border: 1px solid #c8c8c8; display: flex; align-items: center; justify-content: center; box-sizing: border-box; background: #f4f4f4; color: #444; font-size: 10px; border-left: none; }
    .nb.on { background: #82b6e2; color: #123; border-left: 1px solid #c8c8c8; }
    .xl { font: 700 14px "Liberation Sans", sans-serif; color: #222; }
    .inp { height: 16px; background: #fff; border: 1px solid #d2d2d2; box-sizing: border-box; width: 100%; display: flex; align-items: center; padding-left: 3px; color: #888; font-size: 10px; }
    .sep { width: 1px; height: 28px; background: #dadada; }
    .sts { height: 27px; display: flex; background: #f0f0f0; align-items: center; color: #444; }
    .sc { flex: none; height: 24px; display: flex; align-items: center; box-sizing: border-box; border-right: 1px solid #aaa; white-space: nowrap; }
    .sc.nb2 { border-right: none; }
    .sc.cn { justify-content: center; }
    .sc.dot2 { border-right: 1px dotted #999; }
    .sc.tx { padding-left: 3px; }
    .ptr { margin: 0 8px 0 10px; display: flex; }
    .emk { position: relative; display: flex; }
    .emk .o { position: absolute; right: -5px; bottom: -2px; }
    .purple { position: absolute; left: 1024px; bottom: 0; width: 249px; height: 7px; background: #5b5a9e; }
  `;

  tabsData: [string, number, string][] = [
    ["File", 39, "file"], ["Home", 52, "on"], ["View", 44, ""], ["Annotate", 66, ""], ["Attach", 52, ""], ["Analyze", 58, ""],
    ["Curves", 54, ""], ["Constraints", 72, ""], ["Utilities", 58, ""], ["Drawing Aids", 82, ""], ["Content", 60, ""], ["Help", 44, ""],
  ];

  renderTask() {
    const hi = [143, 349.5, 391, 432, 473, 514.5, 556.5, 597, 639, 680.5, 721.5];
    return html`<div class="task">
      <div class="strip">${row(0, hi.map((c) => [c, 34, ""]))}</div>
      ${row(0, [
        [20, 16, tb.win], [60, 16, tb.search], [100, 14, tb.tv], [143, 20, tb.chrome], [182, 17, tb.play], [225, 18, tb.snip],
        [266, 20, tb.store], [307, 20, tb.expl], [349, 20, tb.xs], [390, 21, tb.edge], [432, 20, tb.outlook], [474, 20, tb.one],
        [514, 19, tb.teal], [556, 20, tb.moon], [597, 20, tb.teams], [639, 40, html`<div class="sl act" style="width:40px">${tb.ms}</div>`],
        [680, 16, tb.note], [721, 20, tb.orange], [1056, 10, chev("#ddd")], [1082, 10, tb.mic], [1110, 15, tb.cloud], [1137, 12, tb.wifi],
        [1165, 24, "ENG"], [1206, 50, html`<div class="clock">2:46 PM<br />1/20/2021</div>`], [1252, 14, tb.notif],
      ])}
    </div>`;
  }

  renderTitle() {
    return html`<div class="tr">
      ${row(0, [
        [9, 16, t.logo], [91, 138, html`<div class="tcb"><span>Drawing</span>${car}</div>`], [171, 15, t.ve], [182, 6, car],
        [200, 14, t.open], [218, 13, t.save()], [236, 14, t.saves], [255, 13, t.compress], [274, 12, t.undo(B)], [289, 6, car],
        [304, 12, t.undo("#9cc4e4", true)], [323, 12, t.pin], [342, 15, t.print], [361, 7, t.more],
        [671, 170, html`<span class="ttl">123.dgn [2D - V8 DGN] - MicroStation</span>`],
        [1190, 14, user], [1204, 6, car], [1218, 8, html`<span>?</span>`],
        [1235, 9, I(9, 3, svg`<rect width="9" height="2" fill="#555"/>`)],
        [1252, 9, I(9, 10, svg`<path d="M.5 3h6v6.500h-6zM2.500 3V.5h6v6.500h-2" fill="none" stroke="#666"/>`)],
        [1271, 10, I(10, 10, svg`<path d="M.5.5l9 9M9.500.5l-9 9" stroke="#555"/>`)],
      ])}
    </div>`;
  }

  renderTabs() {
    return html`<div class="tabs">
      ${this.tabsData.map(([l, w, c]) => html`<div class="tab ${c}" style="width:${w}px">${l}</div>`)}
      <div class="srch"><span>Search Ribbon (F4)</span><span class="grow"></span>
        ${I(11, 12, svg`<circle cx="7" cy="4.500" r="3.500" fill="none" stroke="#2a80d0" stroke-width="1.500"/><path d="M4.500 7L1 11" stroke="#2a80d0" stroke-width="1.500"/>`)}
        ${car}</div>
      <div class="col">${chevU("#444")}</div>
    </div>`;
  }

  renderRibbon() {
    return html`<div class="rib">
      ${group(296, "Attributes", html`<div class="attrs">
        <div class="arow">
          <div class="sl" style="width:19px">${attr.laptop}</div>
          <div class="cb" style="width:116px"><span>None</span>${car}</div>
          <div class="cb" style="width:145px"><span>Default</span>${car}</div>
        </div>
        <div class="arow">
          ${acombo(60, attr.a)}${acombo(60, attr.b)}${acombo(52, attr.c)}${acombo(52, attr.d)}${acombo(52, attr.e)}
        </div>
      </div>`)}
      ${group(152, "Primary", html`
        ${bigb(48, big.explorer, ["Explorer"])}
        ${bigb(36, big.attach, ["Attach", arrowed("Tools")], true)}${sp(3)}
        ${col(30, [[sm.level, 1], [sm.doc, 1], [sm.green, 1]])}
        ${col(30, [[sm.stack, 1], [sm.info, 0], [sm.pane, 1]])}`)}
      ${group(164, "Selection", html`
        ${sp(3)}${bigb(46, big.arrow, ["Element", "Selection"])}
        ${col(19, [[sm.dash1, 0], [sm.dash2, 0], ["", 0]])}
        ${col(19, [[sm.lock, 0], [sm.unlock, 0], [sm.cards, 0]])}
        ${bigb(42, big.fence, ["Fence", arrowed("Tools")], true)}
        ${col(30, [[sm.cut, 0], [sm.copy, 0], [sm.paste, 1]])}`)}
      ${group(221, "Placement", html`
        ${bigb(56, big.smart, ["Place", "SmartLine"])}
        ${bigb(24, big.line, ["Place", "Line"])}${sp(6)}
        ${bigb(40, big.arc, ["Arc", arrowed("Tools")], true)}
        ${col(30, [[sm.circle, 1], [sm.rect, 1], [sm.zig, 1]])}
        ${col(30, [[sm.plus, 1], [sm.chevs, 1], [sm.a, 1]])}
        ${col(30, [[sm.sun, 1]])}`)}
      ${group(155, "Manipulate", html`
        ${bigb(40, big.move, ["Move"])}
        ${bigb(24, big.copy, ["Copy"])}${sp(6)}
        ${bigb(28, big.rotate, ["Rotate"])}
        ${col(20, [[sm.m1, 0], [sm.m3, 0], [sm.m5, 0]])}${sp(2)}
        ${col(30, [[sm.m2, 0], [sm.m4, 0], [sm.m6, 1]])}`)}
      ${group(193, "Modify", html`
        ${sp(2)}${bigb(46, big.modify, ["Modify", "Element"])}
        ${bigb(36, big.brk, ["Break", "Element"])}${sp(4)}
        ${bigb(40, big.trim, ["Trim", "Multiple"])}
        ${col(30, [[sm.x, 0], [sm.y, 0], [sm.t, 1]])}
        ${col(30, [[sm.ext, 1], [sm.pal, 1], [sm.redx, 0]])}`)}
      ${group(99, "Groups", html`
        ${sp(2)}${bigb(38, big.region, ["Create", "Region"])}
        ${col(18, [[sm.g1, 0], [sm.g2, 0], [sm.g3, 0]])}
        ${col(30, [[sm.g4, 1], [sm.g5, 1], [sm.g6, 1]])}`,
        html`<span class="launch">${I(7, 7, svg`<path d="M0 .5h5M.5 0v5M3 3l3 3M6 3v3H3" fill="none" stroke="#777"/>`)}</span>`)}
    </div>`;
  }

  renderView() {
    return html`<div class="vt">
      <div class="vico"></div><span>View 1, 2D Metric Design [Displayset]</span>
      <div class="grow"></div>
      <div class="sl" style="width:29px;margin-right:3px"><div class="vbtn">${I(11, 3, svg`<rect width="11" height="2.500" fill="#fff"/>`)}</div></div>
      <div class="sl" style="width:26px;margin-right:1px"><div class="vbtn">${I(11, 11, svg`<path d="M.5 3.500h7v7h-7zM3.500 3V.5h7v7H8" fill="none" stroke="#333"/>`)}</div></div>
      <div class="sl" style="width:28px;margin-right:3px"><div class="vbtn red">${I(10, 9, svg`<path d="M1 1l8 7M9 1L1 8" stroke="#fff" stroke-width="2.200"/>`)}</div></div>
    </div>
    <div class="vtool">
      ${row(0, [
        [12, 17, v.win], [26, 7, carK], [42, 16, v.levels], [61, 16, v.sun], [76, 7, carK], [84, 1, html`<div class="vs"></div>`],
        [95, 12, v.brush], [117, 17, v.zin], [136, 17, v.zout], [155, 17, v.zwin], [171, 15, v.fit], [189, 16, v.rot], [208, 15, v.hand],
        [218, 1, html`<div class="vs"></div>`], [231, 16, v.left], [250, 16, v.right], [261, 1, html`<div class="vs"></div>`],
        [272, 17, v.c1], [292, 17, v.c2], [309, 16, v.c3],
      ])}
    </div>`;
  }

  renderDialog() {
    const l1 = ["!", "$", "%", "%%", "3ppdialog", "accudraw"];
    const l2 = ["copy parallel", "move parallel", "xy=0,0", "Open Level Display", "Level Display", "level display"];
    return html`<div class="dlg">
      <div class="dtop">
        <div class="dinp"><div class="caret"></div></div>
        <div class="dbtn">${chev("#888")}</div>
      </div>
      <div class="drow">
        <div class="lb" style="width:140px">
          <div class="lrows">${l1.map((x, i) => html`<div class="lr ${i === 0 ? "sel" : ""}">${x}</div>`)}</div>
          <div class="sb"><div class="sba">${chevU()}</div><div class="th" style="height:13px"></div><div class="sgap"></div><div class="sba">${chev()}</div></div>
        </div>
        <div class="lb" style="width:120px;margin-left:6px"></div>
        <div class="lb" style="width:120px;margin-left:7px"></div>
        <div class="rc">
          <div class="lb" style="height:66px"></div>
          <div class="allb"><span>All</span>${carK}</div>
        </div>
      </div>
      <div class="lb" style="width:520px;height:96px;margin-top:12px">
        <div class="lrows">${l2.map((x) => html`<div class="lr">${x}</div>`)}</div>
        <div class="sb sbw"><div class="sba">${chevU()}</div><div class="th" style="height:55px"></div><div class="sgap"></div><div class="sba">${chev()}</div></div>
      </div>
    </div>`;
  }

  renderEsel() {
    const rows = ["Line", "Annotation Cell", "Arc", "Associative Region", "Bspline Curve", "Bspline Surface", "Cell", "Civil Custom Graphics", "Complex Chain", "Complex Shape", "Cone", "Curve"];
    const tools1 = [[981, e.t2, 15], [1001, e.t3, 15], [1020, e.t4, 15], [1039, e.t5, 15]];
    const tools2 = [[981, e.plus, 14], [1000, e.minus, 15], [1020, e.half, 15], [1039, e.c, 16]];
    const mapT = (a: any[]) => a.map(([c, i, w]) => [c - 941, w, i]);
    return html`<div class="esel">
      <div class="et">${row(0, [
        [11, 14, e.logo], [62, 78, html`<span>Element Selection</span>`], [130, 9, I(9, 1, svg`<rect width="9" height="1" fill="#bbb"/>`)],
        [168, 9, I(9, 9, svg`<rect x=".5" y=".5" width="8" height="8" fill="none" stroke="#eee"/>`)], [207, 9, I(9, 9, svg`<path d="M0 0l9 9M9 0L0 9" stroke="#aaa"/>`)],
      ])}</div>
      <div class="tbr">${row(0, [
        [21, 18, html`<div class="ebtn">${e.t1}</div>`], ...mapT(tools1),
        [136, 14, html`<div class="emark">${e.block}<span class="o">${e.no}</span></div>`],
      ])}</div>
      <div class="tbr tbr2">${row(0, [
        [21, 18, html`<div class="ebtn">${e.s1}</div>`], ...mapT(tools2),
        [136, 14, html`<div class="emark">${e.block}<span class="p">${ptr(0.6)}</span></div>`],
      ])}<span class="upt">${I(8, 5, svg`<path d="M0 5h8L4 0z" fill="#222"/>`)}</span></div>
      <div class="etabs">
        ${[[51, e.layers], [53, e.color], [51, e.style], [54, e.weight]].map(([w, i]: any, n) => html`<div class="etb ${n === 3 ? "last" : ""}" style="width:${w}px">${i}</div>`)}
      </div>
      <div class="etabs etabs2">
        ${[[52, e.el, 1], [51, e.cls, 0], [52, e.tmpl, 0], [53, e.ball, 0]].map(([w, i, on]: any, n) => html`<div class="etb ${on ? "on" : ""} ${n === 3 ? "last" : ""}" style="width:${w}px">${i}</div>`)}
      </div>
      <div class="elist">
        <div class="ecol">
          <div class="ehead"><div class="h1">Element Type</div><div class="h2">${chev("#888")}</div></div>
          <div class="erows">${rows.map((x, i) => html`<div class="lr ${i === 0 ? "sel" : ""}"><span>${x}</span>${i === 0 ? html`<span class="dot"></span>` : ""}</div>`)}</div>
        </div>
        <div class="sb esb"><div class="sba">${chevU()}</div><div class="th" style="height:30px"></div><div class="sgap"></div><div class="sba">${chev()}</div></div>
      </div>
    </div>`;
  }

  renderBottom() {
    return html`<div class="bt">
      ${row(0, [
        [18, 18, st.back], [36, 7, car], [54, 18, st.fwd], [73, 7, car], [91, 22, st.dish], [109, 7, car],
        [183, 132, html`<div class="cbm" style="width:132px">${st.dual}<span>2D Metric Design</span><span class="grow"></span>${carK}</div>`],
        [265, 22, st.dual2],
        [338, 112, html`<div class="nums">${[1, 2, 3, 4, 5, 6, 7, 8].map((n) => html`<div class="nb ${n === 1 ? "on" : ""}">${n}</div>`)}</div>`],
        [401, 1, html`<div class="sep"></div>`],
        [415, 12, html`<span class="xl">X</span>`], [494.5, 141, html`<div class="inp">2.164</div>`], [569, 1, html`<div class="sep"></div>`],
        [582, 12, html`<span class="xl">Y</span>`], [661, 140, html`<div class="inp">3.612</div>`],
      ])}
    </div>`;
  }

  renderStatus() {
    const c = (w: number, cls: string, body: any = "") => html`<div class="sc ${cls}" style="width:${w}px">${body}</div>`;
    return html`<div class="sts">
      ${c(261, "dot2 tx", "Element Selection > Identify element to add to set")}
      ${c(3, "", "")}
      ${c(25, "cn", st.info)}
      ${c(475, "tx", "Line, Level: Default")}
      ${c(25, "cn", st.curve)}
      ${c(27, "cn", st.lock)}
      ${c(117, "tx", "Default")}
      ${c(104, "", html`<span class="ptr">${ptr(0.9)}</span><span>: 1</span>`)}
      ${c(26, "")}${c(27, "")}
      ${c(26, "cn", st.save)}${c(27, "cn", st.scroll)}${c(27, "cn", st.grid)}${c(26, "")}
      ${c(27, "cn", html`<span class="emk">${st.note}<span class="o">${st.no}</span></span>`)}${c(26, "")}
      ${c(28, "cn nb2", st.cube)}
    </div>`;
  }

  render() {
    return html`
      ${this.renderTask()}${this.renderTitle()}${this.renderTabs()}${this.renderRibbon()}${this.renderView()}
      <div class="canvas">
        <div class="vline"></div>
        <div class="triad">${I(52, 56, svg`
          <path d="M13 1l12 14h-6v15H7V15H1z" fill="#0f4a10" stroke="#1e6a1e"/>
          <text x="7" y="28" font-size="17" fill="#8ab08a">Y</text>
          <circle cx="13" cy="39" r="6.500" fill="#0a0a60" stroke="#22228a"/><circle cx="13" cy="39" r="1.500" fill="#3a5ad8"/>
          <path d="M21 33h14v-7l14 13-14 12v-7H21z" fill="#3a0808" stroke="#6a1818"/>
          <text x="26" y="44" font-size="15" fill="#b08a8a">X</text>`)}</div>
        ${this.renderDialog()}
        <div class="hl"><div class="hli"></div></div>
        <div class="cur">${I(11, 18, svg`<path d="M1 1v13l3-3 2 5 2-1-2-4h4z" fill="#fff" stroke="#222" stroke-width=".8"/>`)}</div>
        ${this.renderEsel()}
      </div>
      ${this.renderBottom()}${this.renderStatus()}
      <div class="purple"></div>
    `;
  }
}
